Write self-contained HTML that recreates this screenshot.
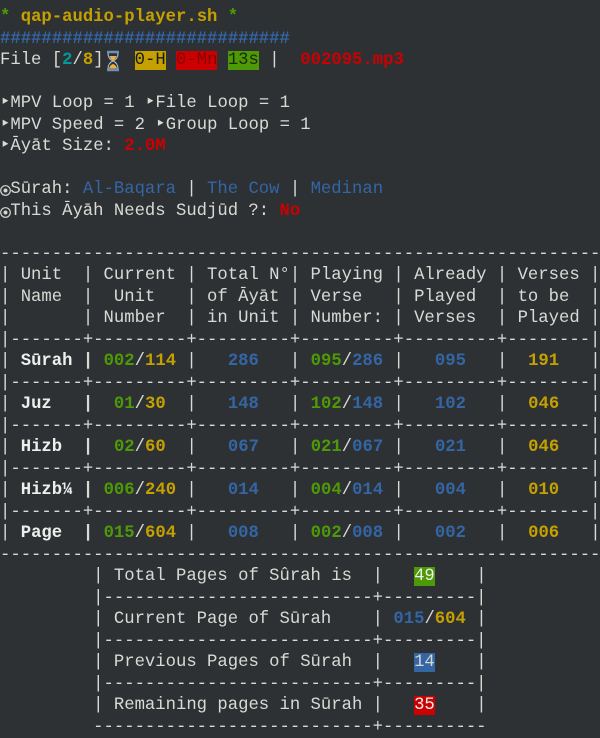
<!DOCTYPE html>
<html><head><meta charset="utf-8">
<style>
html,body{margin:0;padding:0;background:#2d3134;}
body{width:600px;height:731px;overflow:hidden;}
.t{font-family:"Liberation Mono","DejaVu Sans Mono",monospace;font-size:17.25px;color:#d8dad4;padding-top:7px;}
.l{height:21.5px;line-height:21.5px;white-space:pre;}
b{font-weight:bold}
.g{color:#4e9a06}.y{color:#c4a000}.bl{color:#3465a4}.r{color:#cc0000}.c{color:#06989a}.w{color:#eeeeec}
.by{background:#c4a000;color:#1a1a1a}.br{background:#cc0000;color:#8a0000}.bg{background:#4e9a06;color:#1a2a06}.bb{background:#3465a4;color:#d3d7cf}
.ic{display:inline-block;width:10.35px;height:21.5px;vertical-align:top;}
.hg{display:inline-block;width:20.7px;height:21.5px;vertical-align:top;}
</style></head><body><div class="t">
<div class="l"><b class="g">*</b> <b class="y">qap-audio-player.sh</b> <b class="g">*</b></div>
<div class="l"><b class="bl">############################</b></div>
<div class="l">File [<b class="c">2</b>/<b class="y">8</b>]<span class="hg"><svg width="21" height="22" viewBox="0 0 21 22"><path d="M3 2h12M3 20h12" stroke="#6d8fb8" stroke-width="2.5"/><path d="M4 3 Q4 9 9 11 Q4 13 4 19 M14 3 Q14 9 9 11 Q14 13 14 19" stroke="#9fb6d4" stroke-width="1.2" fill="none"/><path d="M5.5 6 L12.5 6 Q11 9.5 9 11 Q7 9.5 5.5 6Z M5 18.5 L13 18.5 Q12 15 9 14 Q6 15 5 18.5Z" fill="#f0b040"/></svg></span> <span class="by">0-H</span> <span class="br">0-Mn</span> <span class="bg">13s</span> |  <b class="r">002095.mp3</b></div>
<div class="l"> </div>
<div class="l">‣MPV Loop = 1 ‣File Loop = 1</div>
<div class="l">‣MPV Speed = 2 ‣Group Loop = 1</div>
<div class="l">‣Āyāt Size: <b class="r">2.0M</b></div>
<div class="l"> </div>
<div class="l"><span class="ic"><svg width="11" height="22" viewBox="0 0 11 22"><circle cx="5.5" cy="11.5" r="4.8" stroke="#d3d7cf" stroke-width="1.2" fill="none"/><circle cx="5.5" cy="11.5" r="2" fill="#d3d7cf"/></svg></span>Sūrah: <span class="bl">Al-Baqara</span> | <span class="bl">The Cow</span> | <span class="bl">Medinan</span></div>
<div class="l"><span class="ic"><svg width="11" height="22" viewBox="0 0 11 22"><circle cx="5.5" cy="11.5" r="4.8" stroke="#d3d7cf" stroke-width="1.2" fill="none"/><circle cx="5.5" cy="11.5" r="2" fill="#d3d7cf"/></svg></span>This Āyāh Needs Sudjūd ?: <b class="r">No</b></div>
<div class="l"> </div>
<div class="l">----------------------------------------------------------</div>
<div class="l">| Unit  | Current | Total N°| Playing | Already | Verses |</div>
<div class="l">| Name  |  Unit   | of Āyāt | Verse   | Played  | to be  |</div>
<div class="l">|       | Number  | in Unit | Number: | Verses  | Played |</div>
<div class="l">|-------+---------+---------+---------+---------+--------|</div>
<div class="l">| <b class="w">Sūrah</b> <b>|</b> <b class="g">002</b>/<b class="y">114</b> |   <b class="bl">286</b>   | <b class="g">095</b>/<b class="bl">286</b> |   <b class="bl">095</b>   |  <b class="y">191</b>   |</div>
<div class="l">|-------+---------+---------+---------+---------+--------|</div>
<div class="l">| <b class="w">Juz</b>   <b>|</b>  <b class="g">01</b>/<b class="y">30</b>  |   <b class="bl">148</b>   | <b class="g">102</b>/<b class="bl">148</b> |   <b class="bl">102</b>   |  <b class="y">046</b>   |</div>
<div class="l">|-------+---------+---------+---------+---------+--------|</div>
<div class="l">| <b class="w">Hizb</b>  <b>|</b>  <b class="g">02</b>/<b class="y">60</b>  |   <b class="bl">067</b>   | <b class="g">021</b>/<b class="bl">067</b> |   <b class="bl">021</b>   |  <b class="y">046</b>   |</div>
<div class="l">|-------+---------+---------+---------+---------+--------|</div>
<div class="l">| <b class="w">Hizb¼</b> <b>|</b> <b class="g">006</b>/<b class="y">240</b> |   <b class="bl">014</b>   | <b class="g">004</b>/<b class="bl">014</b> |   <b class="bl">004</b>   |  <b class="y">010</b>   |</div>
<div class="l">|-------+---------+---------+---------+---------+--------|</div>
<div class="l">| <b class="w">Page</b>  <b>|</b> <b class="g">015</b>/<b class="y">604</b> |   <b class="bl">008</b>   | <b class="g">002</b>/<b class="bl">008</b> |   <b class="bl">002</b>   |  <b class="y">006</b>   |</div>
<div class="l">----------------------------------------------------------</div>
<div class="l">         | Total Pages of Sûrah is  |   <span class="bg" style="color:#eeeeec">49</span>    |</div>
<div class="l">         |--------------------------+---------|</div>
<div class="l">         | Current Page of Sūrah    | <b class="bl">015</b>/<b class="y">604</b> |</div>
<div class="l">         |--------------------------+---------|</div>
<div class="l">         | Previous Pages of Sūrah  |   <span class="bb">14</span>    |</div>
<div class="l">         |--------------------------+---------|</div>
<div class="l">         | Remaining pages in Sūrah |   <span class="br" style="color:#eeeeec">35</span>    |</div>
<div class="l">         ---------------------------+----------</div>
</div></body></html>
